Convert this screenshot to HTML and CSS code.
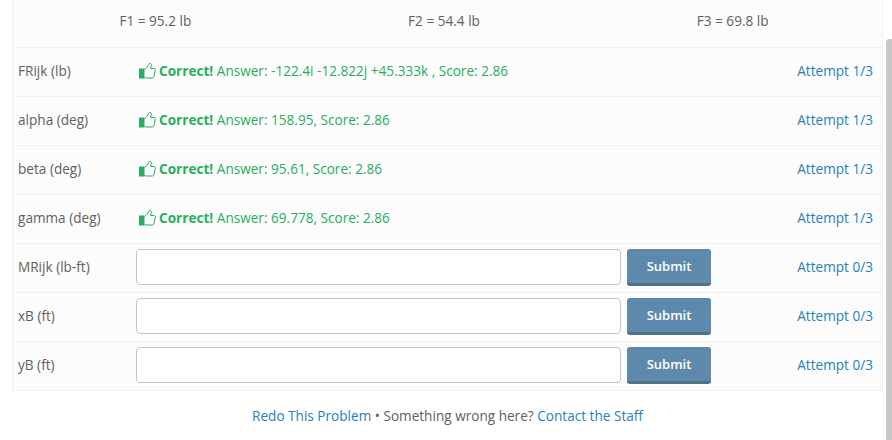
FILE: index.html
```html
<!DOCTYPE html>
<html lang="en">
<head>
    <meta charset="UTF-8">
    <meta name="viewport" content="width=device-width, initial-scale=1.0">
    <title>Problem Parts</title>
    <link rel="stylesheet" href="styles.css">
</head>
<body>
    <svg class="icon-defs" width="0" height="0">
        <symbol id="thumb" viewBox="0 0 17 16">
            <path d="M0 5.500h5.500V15.500H0z" fill="#27ae60"/>
            <path d="M5.500 6.500C7.500 5 9 3.500 9.500 1.500 9.800.7 10.500.5 11 .5c1.300 0 1.700 1.300 1.200 2.700L11.500 5.500H15c1 0 1.500.8 1.300 1.700l-1.400 6.500c-.2.800-.8 1.300-1.600 1.300H8c-1 0-1.500-.5-2.500-.5" fill="none" stroke="#27ae60" stroke-width="1"/>
        </symbol>
    </svg>

    <div class="wrapper">
        <div class="given">
            <span>F1 = 95.2 lb</span>
            <span>F2 = 54.4 lb</span>
            <span>F3 = 69.8 lb</span>
        </div>

        <div class="parts">
            <div class="row">
                <div class="part-name">FRijk (lb)</div>
                <div class="part-body result">
                    <svg class="thumb"><use href="#thumb"/></svg><strong>Correct!</strong> Answer: -122.4i -12.822j +45.333k , Score: 2.86
                </div>
                <a class="attempt" href="#">Attempt 1/3</a>
            </div>
            <div class="row">
                <div class="part-name">alpha (deg)</div>
                <div class="part-body result">
                    <svg class="thumb"><use href="#thumb"/></svg><strong>Correct!</strong> Answer: 158.95, Score: 2.86
                </div>
                <a class="attempt" href="#">Attempt 1/3</a>
            </div>
            <div class="row">
                <div class="part-name">beta (deg)</div>
                <div class="part-body result">
                    <svg class="thumb"><use href="#thumb"/></svg><strong>Correct!</strong> Answer: 95.61, Score: 2.86
                </div>
                <a class="attempt" href="#">Attempt 1/3</a>
            </div>
            <div class="row">
                <div class="part-name">gamma (deg)</div>
                <div class="part-body result">
                    <svg class="thumb"><use href="#thumb"/></svg><strong>Correct!</strong> Answer: 69.778, Score: 2.86
                </div>
                <a class="attempt" href="#">Attempt 1/3</a>
            </div>
            <div class="row">
                <div class="part-name">MRijk (lb-ft)</div>
                <div class="part-body">
                    <input type="text">
                    <button type="button">Submit</button>
                </div>
                <a class="attempt" href="#">Attempt 0/3</a>
            </div>
            <div class="row">
                <div class="part-name">xB (ft)</div>
                <div class="part-body">
                    <input type="text">
                    <button type="button">Submit</button>
                </div>
                <a class="attempt" href="#">Attempt 0/3</a>
            </div>
            <div class="row">
                <div class="part-name">yB (ft)</div>
                <div class="part-body">
                    <input type="text">
                    <button type="button">Submit</button>
                </div>
                <a class="attempt" href="#">Attempt 0/3</a>
            </div>
        </div>

        <p class="footer">
            <a href="#">Redo This Problem</a> • Something wrong here? <a href="#">Contact the Staff</a>
        </p>
    </div>

    <div class="scroll-thumb"></div>
</body>
</html>
```

FILE: styles.css
```css
html, body {
    height: 100%;
    overflow: hidden;
}

body {
    font-family: "Open Sans", sans-serif;
    font-size: 13.6px;
    line-height: 20px;
    margin: 0;
    padding: 0;
    color: #606060;
    background: #fff;
}

a {
    color: #2980b9;
    text-decoration: none;
}

.icon-defs {
    position: absolute;
}

.wrapper {
    width: 871px;
    margin-left: 12px;
}

.given {
    display: grid;
    grid-template-columns: repeat(3, 1fr);
    height: 47px;
    padding-bottom: 5px;
    padding-right: 3px;
    box-sizing: border-box;
    align-items: center;
    text-align: center;
    background: #fcfcfc;
    border-left: 1px solid #f1f1f1;
    border-right: 1px solid #f1f1f1;
}

.given span {
    margin-right: 4px;
}

.parts {
    border: 1px solid #f1f1f1;
    border-bottom: none;
}

.row {
    display: flex;
    align-items: center;
    height: 46px;
    padding-bottom: 2px;
    background: #fcfcfc;
    border-bottom: 1px solid #f1f1f1;
}

.part-name {
    width: 118px;
    padding-left: 5px;
    box-sizing: border-box;
    flex-shrink: 0;
}

.part-body {
    flex: 1;
    display: flex;
    align-items: center;
    gap: 6px;
    padding-left: 5px;
}

.result {
    display: block;
    padding-left: 8px;
    color: #27ae60;
}

.thumb {
    width: 17px;
    height: 16px;
    margin-right: 3px;
    vertical-align: -3px;
}

input {
    width: 485px;
    height: 36px;
    box-sizing: border-box;
    border: 1px solid #c4c4c4;
    border-radius: 4px;
    background: #fff;
}

button {
    width: 84px;
    height: 37px;
    border: none;
    border-bottom: 3px solid #4f7289;
    border-radius: 3px;
    background: #5d8aac;
    color: #fff;
    font-family: "Open Sans", sans-serif;
    font-size: 13px;
    font-weight: 600;
    padding: 0;
}

.attempt {
    width: 120px;
    padding-right: 9px;
    box-sizing: border-box;
    text-align: right;
}

.footer {
    margin: 15px 0 0;
    text-align: center;
}

.scroll-thumb {
    position: absolute;
    top: 39px;
    right: 0;
    width: 6px;
    height: 401px;
    background: #c8c8c8;
    border-radius: 3px 0 0 0;
}
```
